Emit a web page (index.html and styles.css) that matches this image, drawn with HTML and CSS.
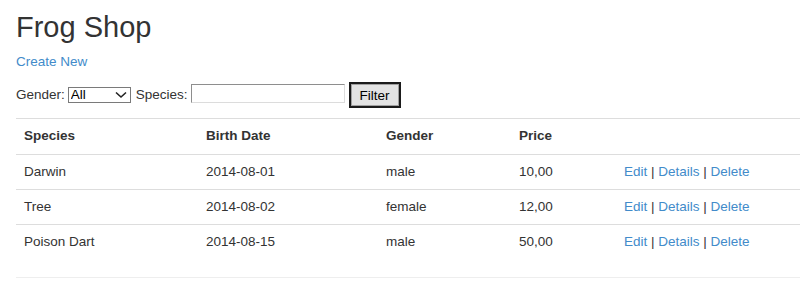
FILE: index.html
```html
<!DOCTYPE html>
<html>
<head>
<meta charset="utf-8">
<title>Frog Shop</title>
<link rel="stylesheet" href="styles.css">
</head>
<body>
<div class="container">
  <h2 class="title">Frog Shop</h2>
  <p class="create"><a href="#">Create New</a></p>
  <form class="filter">
    <label class="lbl">Gender:</label>
    <span class="select-wrap">
      <select class="select"><option>All</option><option>male</option><option>female</option></select>
      <svg class="chev" width="12" height="8" viewBox="0 0 12 8"><path d="M1 1.5 L6 6 L11 1.5" fill="none" stroke="#222" stroke-width="1.6"/></svg>
    </span>
    <label class="lbl">Species:</label>
    <input class="text" type="text">
    <button class="btn" type="button">Filter</button>
  </form>
  <table class="table">
    <colgroup>
      <col class="c1"><col class="c2"><col class="c3"><col class="c4"><col>
    </colgroup>
    <tr>
      <th>Species</th><th>Birth Date</th><th>Gender</th><th>Price</th><th></th>
    </tr>
    <tr>
      <td>Darwin</td><td>2014-08-01</td><td>male</td><td>10,00</td>
      <td><a href="#">Edit</a> | <a href="#">Details</a> | <a href="#">Delete</a></td>
    </tr>
    <tr>
      <td>Tree</td><td>2014-08-02</td><td>female</td><td>12,00</td>
      <td><a href="#">Edit</a> | <a href="#">Details</a> | <a href="#">Delete</a></td>
    </tr>
    <tr>
      <td>Poison Dart</td><td>2014-08-15</td><td>male</td><td>50,00</td>
      <td><a href="#">Edit</a> | <a href="#">Details</a> | <a href="#">Delete</a></td>
    </tr>
  </table>
  <hr class="rule">
</div>
</body>
</html>
```

FILE: styles.css
```css
html, body {
  margin: 0;
  padding: 0;
  background: #fff;
}
body {
  font-family: "Liberation Sans", Arial, sans-serif;
  font-size: 13.5px;
  line-height: 20px;
  color: #333;
}
.container {
  padding: 0 0 0 16px;
}
a {
  color: #428bca;
  text-decoration: none;
}
.title {
  font-size: 29px;
  font-weight: 500;
  line-height: 31px;
  margin: 12px 0 9px;
  color: #333;
}
.create {
  margin: 0 0 10px;
  line-height: 20px;
}
.filter {
  display: flex;
  align-items: center;
  height: 26px;
  margin: 0;
}
.lbl {
  margin-right: 3px;
}
.select-wrap {
  position: relative;
  display: inline-block;
  margin-right: 5px;
}
.select {
  appearance: none;
  -webkit-appearance: none;
  width: 63px;
  height: 16px;
  box-sizing: border-box;
  border: 1px solid #7a7a7a;
  border-radius: 0;
  background: #fff;
  font-family: "Liberation Sans", Arial, sans-serif;
  font-size: 13.5px;
  line-height: 14px;
  padding: 0 0 0 2px;
  color: #000;
  display: block;
}
.chev {
  position: absolute;
  right: 4px;
  top: 4px;
  pointer-events: none;
}
.text {
  width: 154px;
  height: 19px;
  box-sizing: border-box;
  border: 1px solid;
  border-color: #8e8e8e #dcdcdc #dcdcdc #8e8e8e;
  padding: 0 2px;
  margin: -3px 4px 0 0;
  font-size: 13px;
  background: #fff;
}
.btn {
  width: 52px;
  height: 26px;
  box-sizing: border-box;
  border: 2px solid #1b1b1b;
  box-shadow: inset 0 0 0 1px #a0a0a0;
  background: #e3e3e3;
  border-radius: 0;
  font-family: "Liberation Sans", Arial, sans-serif;
  font-size: 13.5px;
  color: #000;
  padding: 0;
  margin: 0;
}
.table {
  width: 100%;
  table-layout: fixed;
  border-collapse: collapse;
  border-spacing: 0;
  margin: 10px 0 0;
}
.c1 { width: 182px; }
.c2 { width: 180px; }
.c3 { width: 133px; }
.c4 { width: 105px; }
.table th,
.table td {
  text-align: left;
  vertical-align: top;
  border-top: 1px solid #dddddd;
  padding: 7px 8px 7px;
  line-height: 20px;
  white-space: nowrap;
}
.table th {
  font-weight: bold;
  padding-bottom: 8px;
}
.rule {
  border: 0;
  border-top: 1px solid #eeeeee;
  margin: 18px 0 0;
  height: 0;
}
```
